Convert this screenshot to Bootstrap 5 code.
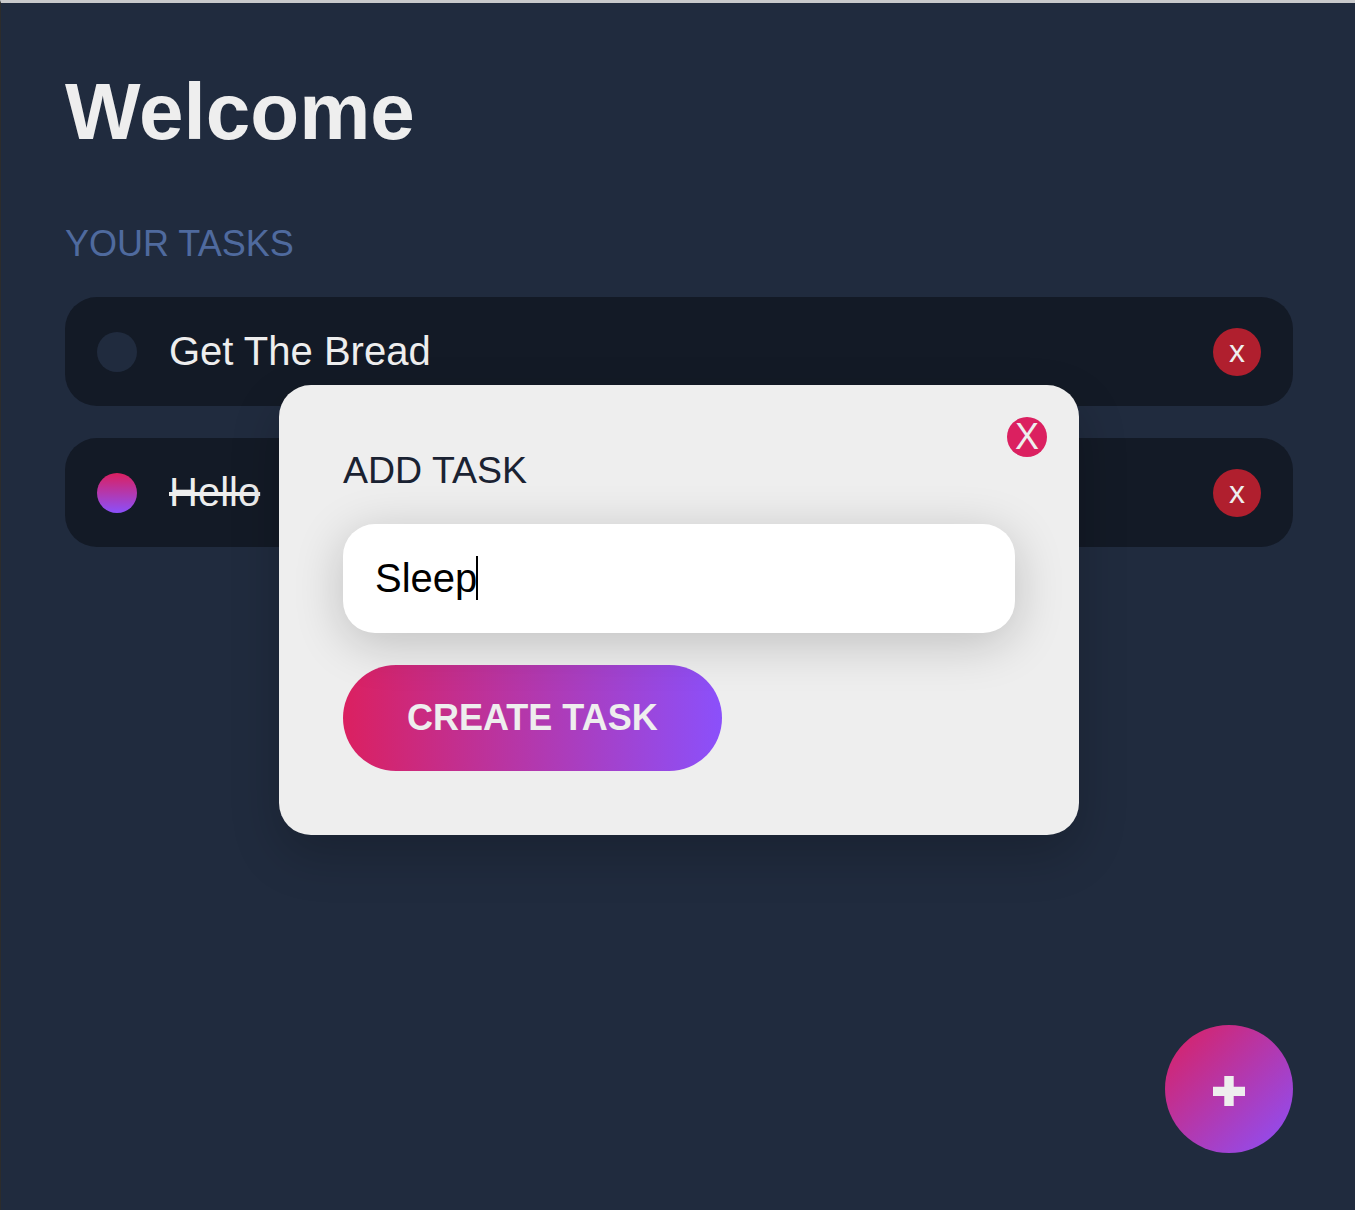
<!DOCTYPE html>
<html lang="en">
<head>
  <meta charset="UTF-8" />
  <title>Tasks</title>
  <meta name="viewport" content="width=device-width, initial-scale=1" />
  <link href="https://cdn.jsdelivr.net/npm/bootstrap@5.3.3/dist/css/bootstrap.min.css" rel="stylesheet" />
  <style>
    html, body {
      height: 100%;
    }
    body {
      background-color: #202b3e;
      color: #eeeeee;
      font-family: "Liberation Sans", Arial, sans-serif;
      overflow: hidden;
    }
    .app-page {
      position: relative;
      height: 100vh;
      padding: 64px 62px 0 64px;
      border-top: 3px solid #c9cacc;
      border-left: 1px solid #2c2c2c;
    }
    .app-title {
      font-size: 80px;
      line-height: 92px;
      font-weight: 700;
      margin: -1px 0 65px;
      color: #eeeeee;
    }
    .app-subtitle {
      font-size: 36px;
      line-height: 41px;
      font-weight: 400;
      margin: 0 0 33px;
      color: #4f6a9e;
    }
    .task-row {
      height: 109px;
      padding: 0 32px;
      margin-bottom: 32px;
      background-color: #131a26;
      border-radius: 32px;
    }
    .task-check {
      width: 40px;
      height: 40px;
      margin-right: 32px;
      background-color: #202b3e;
    }
    .task-check-done {
      background-image: linear-gradient(to bottom, #db2060, #8b50fb);
    }
    .task-text {
      font-size: 40px;
      line-height: 46px;
      padding-bottom: 2px;
      color: #eeeeee;
    }
    .task-done {
      text-decoration: line-through;
    }
    .task-delete {
      width: 48px;
      height: 48px;
      padding: 0 0 2px;
      border: 0;
      background-color: #b01f2e;
      color: #eeeeee;
      font-size: 32px;
      line-height: 46px;
    }
    .task-modal {
      position: absolute;
      left: 278px;
      top: 382px;
      width: 800px;
      height: 450px;
      padding: 64px;
      background-color: #eeeeee;
      border-radius: 32px;
      box-shadow: 0 20px 50px rgba(0, 0, 0, 0.2);
      color: #1a2232;
    }
    .modal-close {
      position: absolute;
      top: 32px;
      right: 32px;
      width: 40px;
      height: 40px;
      padding: 0;
      border: 0;
      background-color: #db2060;
      color: #eeeeee;
      font-size: 36px;
      line-height: 40px;
    }
    .modal-label {
      display: block;
      font-size: 37.5px;
      line-height: 41px;
      margin: 1px 0 33px;
    }
    .input-wrap {
      position: relative;
      margin-bottom: 32px;
    }
    .task-input {
      width: 100%;
      height: 109px;
      padding: 0 32px;
      border: 0;
      outline: 0;
      background-color: #ffffff;
      border-radius: 32px;
      box-shadow: 0 10px 50px rgba(0, 0, 0, 0.2);
      color: #000000;
      font-size: 40px;
      font-family: inherit;
    }
    .input-caret {
      position: absolute;
      left: 133px;
      top: 32px;
      width: 2px;
      height: 44px;
      background-color: #000000;
    }
    .create-btn {
      padding: 32px 64px;
      border: 0;
      border-radius: 999px;
      background-image: linear-gradient(to right, #db2060, #8b50fb);
      color: #eeeeee;
      font-size: 36px;
      font-weight: 700;
      line-height: 42px;
    }
    .add-fab {
      position: absolute;
      right: 62px;
      bottom: 57px;
      width: 128px;
      height: 128px;
      padding: 0;
      border: 0;
      background-image: linear-gradient(135deg, #db2060, #8b50fb);
    }
    .fab-plus {
      display: block;
      width: 32px;
      height: 30px;
      margin: 51px 48px 47px;
      fill: #eeeeee;
    }
  </style>
</head>
<body>
  <div class="app-page">
    <h1 class="app-title">Welcome</h1>
    <h2 class="app-subtitle">YOUR TASKS</h2>

    <div class="task-row d-flex align-items-center">
      <span class="task-check rounded-circle flex-shrink-0"></span>
      <span class="task-text flex-grow-1">Get The Bread</span>
      <button class="task-delete rounded-circle" type="button">x</button>
    </div>
    <div class="task-row d-flex align-items-center">
      <span class="task-check task-check-done rounded-circle flex-shrink-0"></span>
      <span class="task-text task-done flex-grow-1">Hello</span>
      <button class="task-delete rounded-circle" type="button">x</button>
    </div>

    <div class="task-modal">
      <button class="modal-close rounded-circle" type="button">X</button>
      <label class="modal-label" for="newTask">ADD TASK</label>
      <div class="input-wrap">
        <input id="newTask" class="task-input" type="text" value="Sleep" />
        <span class="input-caret"></span>
      </div>
      <button class="create-btn" type="button">CREATE TASK</button>
    </div>

    <button class="add-fab rounded-circle" type="button" aria-label="Add task">
      <svg class="fab-plus" viewBox="0 0 32 30"><path d="M11.3 0h9.4v10.7H32v9.3H20.7v10h-9.4V20H0v-9.3h11.3z"/></svg>
    </button>
  </div>
  <script src="https://cdn.jsdelivr.net/npm/bootstrap@5.3.3/dist/js/bootstrap.bundle.min.js"></script>
</body>
</html>
